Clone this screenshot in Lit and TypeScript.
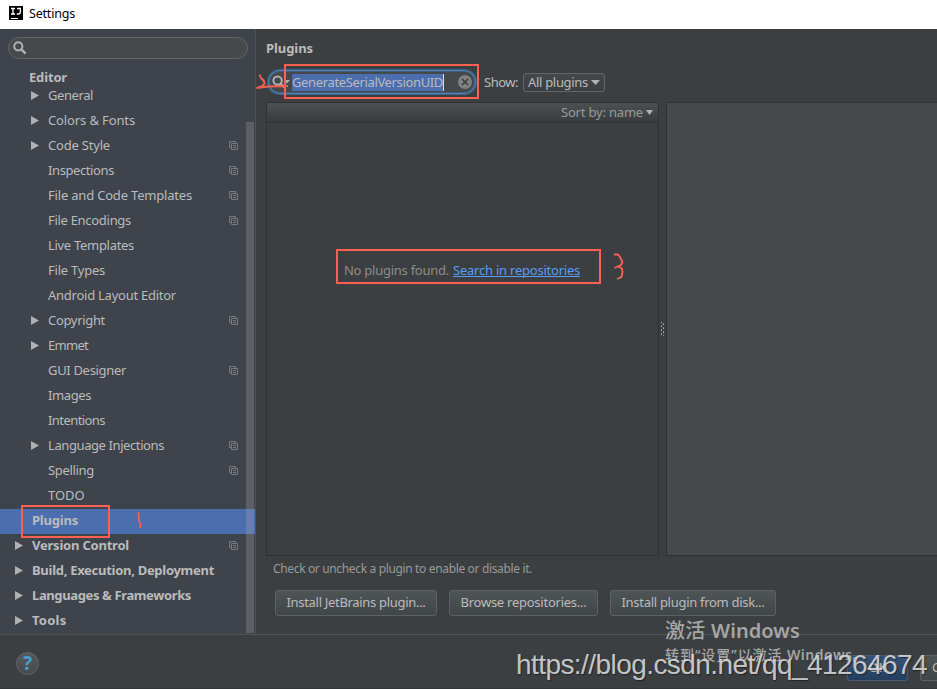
import { LitElement, html, css, svg, nothing } from "lit";
import { customElement, property } from "lit/decorators.js";

/** A single line of text whose tracking is spread so that it fills a given width. */
@customElement("fit-label")
class FitLabel extends LitElement {
  static styles = css`
    :host { display: inline-block; white-space: pre; flex: none; }
  `;
  @property() text = "";
  @property({ type: Number }) w = 0;

  render() {
    return html`<span>${this.text}</span>`;
  }

  updated() {
    const span = this.renderRoot.querySelector("span") as HTMLSpanElement;
    span.style.letterSpacing = "0px";
    const natural = span.getBoundingClientRect().width;
    span.style.letterSpacing = `${(this.w - natural) / this.text.length}px`;
  }
}

interface Row {
  t: string;
  w: number;
  top?: boolean;
  arrow?: boolean;
  copy?: boolean;
  selected?: boolean;
}

const ROWS: Row[] = [
  { t: "General", w: 45, arrow: true },
  { t: "Colors & Fonts", w: 87, arrow: true },
  { t: "Code Style", w: 62, arrow: true, copy: true },
  { t: "Inspections", w: 66, copy: true },
  { t: "File and Code Templates", w: 144, copy: true },
  { t: "File Encodings", w: 83, copy: true },
  { t: "Live Templates", w: 86 },
  { t: "File Types", w: 57 },
  { t: "Android Layout Editor", w: 128 },
  { t: "Copyright", w: 57, arrow: true, copy: true },
  { t: "Emmet", w: 40, arrow: true },
  { t: "GUI Designer", w: 78, copy: true },
  { t: "Images", w: 43 },
  { t: "Intentions", w: 57 },
  { t: "Language Injections", w: 116, arrow: true, copy: true },
  { t: "Spelling", w: 46, copy: true },
  { t: "TODO", w: 36.5 },
  { t: "Plugins", w: 46, top: true, selected: true },
  { t: "Version Control", w: 97, top: true, arrow: true, copy: true },
  { t: "Build, Execution, Deployment", w: 182, top: true, arrow: true },
  { t: "Languages & Frameworks", w: 159, top: true, arrow: true },
  { t: "Tools", w: 34.5, top: true, arrow: true },
];

const label = (t: string, w: number) => html`<fit-label .text=${t} .w=${w}></fit-label>`;

const copyIcon = html`<svg class="copy" width="9" height="9" viewBox="0 0 9 9" fill="none" stroke="#777b80">
  <path d="M2 6.5H.5V.5H6.5V2M2.5 2.5H8.5V8.5H2.5ZM4 4.5H7M4 6.5H7" />
</svg>`;

const arrowIcon = html`<svg width="8" height="9" viewBox="0 0 8 9"><path d="M0 0L8 4.5L0 9Z" fill="#afb1b3" /></svg>`;

const down = (w: number, h: number, fill: string) =>
  html`<svg width=${w} height=${h} viewBox="0 0 10 6" preserveAspectRatio="none"><path d="M0 0H10L5 6Z" fill=${fill} /></svg>`;

@customElement("app-root")
class AppRoot extends LitElement {
  static styles = css`
    :host {
      display: flex; flex-direction: column; position: relative; overflow: hidden;
      width: 937px; height: 689px; box-sizing: border-box;
      background: #3c3f41; color: #bbbbbb;
      font: 13px/18px "Noto Sans", "Open Sans", sans-serif;
    }
    * { box-sizing: border-box; }
    svg { display: block; flex: none; }
    .titlebar {
      height: 29px; flex: none; background: #fff; color: #000;
      display: flex; align-items: center; padding: 0 0 2px 9px; gap: 6px;
      font-size: 12.5px;
    }
    .titlebar svg { margin-bottom: 1px; }
    .body { display: flex; height: 605px; flex: none; }
    .side {
      width: 256px; flex: none; background: #3e434c; border-right: 1px solid #4f5254;
      display: flex; flex-direction: column; position: relative;
    }
    .find {
      margin: 8px 0 0 8px; width: 240px; height: 22px; flex: none;
      border: 1px solid #646566; border-radius: 11px; background: #45494a;
      display: flex; align-items: center; padding-left: 4px;
    }
    .head { height: 25px; flex: none; padding: 9px 0 0 29px; font-weight: 700; line-height: 18px; }
    .row { height: 25px; display: flex; align-items: flex-start; padding: 2px 17px 0 0; }
    .slot { width: 48px; padding: 5px 0 0 31px; flex: none; }
    .top { font-weight: 700; }
    .top .slot { width: 32px; padding-left: 15px; }
    .selected { background: #4b6eaf; }
    .copy { margin: 5px 0 0 auto; }
    .thumb {
      position: absolute; left: 246px; top: 93px; width: 8px; height: 511px;
      background: rgba(166, 166, 166, 0.29);
    }
    .main { flex: 1; min-width: 0; display: flex; flex-direction: column; padding-left: 10px; }
    .title { height: 39px; padding-top: 10px; font-weight: 700; flex: none; }
    .tools { height: 28px; flex: none; display: flex; align-items: center; }
    .query {
      width: 208px; height: 24px; margin-left: 2px; border-radius: 12px; flex: none;
      border: 1px solid #4f84b4; box-shadow: 0 0 0 1px #3d6185, inset 0 0 0 1px #3d5c7c;
      background: #45494a; display: flex; align-items: center; padding: 0 3px 0 3px;
    }
    .query .sel {
      margin-left: 2px; height: 17px; line-height: 17px; background: #4b6eaf; border-right: 1px solid #ddd;
      width: 152px; display: flex;
    }
    .query .clear { margin-left: auto; }
    .show { margin-left: 8px; }
    .combo {
      margin-left: 5px; width: 82px; height: 19px; border: 1px solid #646566; border-radius: 3px;
      background: linear-gradient(#45484a, #3b3e40); display: flex; align-items: center; padding-left: 4px; gap: 3px;
    }
    .panels { display: flex; height: 454px; margin-top: 6px; flex: none; }
    .list { width: 393px; border: 1px solid #2f3132; display: flex; flex-direction: column; }
    .sort {
      height: 20px; border-bottom: 1px solid #303234; background: linear-gradient(#4c5052, #393c3e);
      display: flex; align-items: center; justify-content: flex-end; gap: 3px; padding: 0 5px 1px 0; color: #999;
    }
    .empty { display: flex; padding: 138px 0 0 77px; color: #8c8c8c; gap: 4px; }
    .link { height: 16px; color: #589df6; border-bottom: 1px solid #589df6; }
    .grip { width: 7px; display: flex; align-items: center; justify-content: center; }
    .detail { flex: 1; background: #45494a; border: 1px solid #2f3132; border-right: 0; }
    .hint { height: 34px; padding: 4px 0 0 7px; color: #999; font-size: 12px; flex: none; }
    .buttons { display: flex; gap: 12px; padding-left: 9px; }
    .btn {
      height: 26px; border: 1px solid #5e6162; border-radius: 3px; padding-bottom: 2px; flex: none;
      background: linear-gradient(#4f5556, #414648); display: flex; align-items: center; justify-content: center;
    }
    .b1 { width: 162px; } .b2 { width: 149px; } .b3 { width: 166px; }
    .foot {
      flex: 1; border-top: 1px solid #515151; border-bottom: 1px solid #333638;
      display: flex; padding: 0 0 0 16px; align-items: flex-start;
    }
    .help {
      width: 23px; height: 23px; margin-top: 17px; border-radius: 50%; border: 1px solid #63676a;
      background: linear-gradient(#55595b, #474b4d); color: #4a9fce; font: 700 19px/20px "Noto Sans", sans-serif;
      text-align: center;
    }
    .ok {
      width: 61px; margin: 20px 0 0 auto; background: linear-gradient(#375374, #253e60); border-color: #4c5b6c;
      font-weight: 700;
    }
    .cancel { width: 60px; margin: 20px -43px 0 12px; justify-content: flex-start; padding-left: 11px; }
    .marks { position: absolute; left: 0; top: 0; }
    .activate {
      position: absolute; left: 665px; top: 617px; color: rgba(190, 190, 190, 0.82); font-weight: 600;
      font-family: "Noto Sans", "Noto Sans CJK SC", sans-serif;
    }
    .han { font-weight: 500; }
    .big { font-size: 20px; line-height: 28px; display: flex; }
    .small { font-size: 14px; line-height: 20px; display: flex; }
    .url {
      position: absolute; left: 516px; top: 649px; font: 28px/32px "Liberation Sans", sans-serif;
      color: rgba(225, 225, 225, 0.86); text-shadow: 1px 1px 1px rgba(20, 20, 20, 0.6);
    }
  `;

  private row(r: Row) {
    return html`<div class="row ${r.top ? "top" : ""} ${r.selected ? "selected" : ""}">
      <div class="slot">${r.arrow ? arrowIcon : nothing}</div>
      ${label(r.t, r.w)} ${r.copy ? copyIcon : nothing}
    </div>`;
  }

  private grip() {
    const dots = [0, 1, 2, 3, 4, 5, 6];
    return html`<svg width="4" height="15" viewBox="0 0 4 15">
      ${dots.map((i) => svg`<rect x=${i % 2 ? 2 : 0} y=${i * 2} width="1" height="1" fill="#b0b0b0" />
        <rect x=${i % 2 ? 0 : 2} y=${i * 2 + 1} width="1" height="1" fill="#8a8a8a" />`)}
    </svg>`;
  }

  render() {
    return html`
      <div class="titlebar">
        <svg width="14" height="14" viewBox="0 0 14 14">
          <rect width="14" height="14" fill="#000" />
          <path d="M2 2.5H6M4 2.5V8M2 8H6M8 2.5H11.3V6.6Q11.3 8 9.8 8H7.8" stroke="#fff" stroke-width="1.3" fill="none" />
          <path d="M2 12.5H9" stroke="#fff" />
        </svg>
        ${label("Settings", 46)}
      </div>
      <div class="body">
        <div class="side">
          <div class="find">
            <svg width="14" height="14" viewBox="0 0 14 14" fill="none" stroke="#afb1b3">
              <circle cx="5.3" cy="5.3" r="4.1" stroke-width="2" /><path d="M8.3 8.3L12.6 12.6" stroke-width="2.4" />
            </svg>
          </div>
          <div class="head">${label("Editor", 38)}</div>
          ${ROWS.map((r) => this.row(r))}
          <div class="thumb"></div>
        </div>
        <div class="main">
          <div class="title">${label("Plugins", 47)}</div>
          <div class="tools">
            <div class="query">
              <svg width="18" height="14" viewBox="0 0 18 14" fill="none" stroke="#afb1b3">
                <circle cx="5.6" cy="5.6" r="4.2" stroke-width="2" /><path d="M8.5 8.5L12.4 12.4" stroke-width="2.2" />
                <path d="M12 5H18L15 8.5Z" fill="#afb1b3" stroke="none" />
              </svg>
              <div class="sel">${label("GenerateSerialVersionUID", 151)}</div>
              <svg class="clear" width="14" height="14" viewBox="0 0 14 14">
                <circle cx="7" cy="7" r="7" fill="#7f8182" />
                <path d="M4 4L10 10M10 4L4 10" stroke="#3c3f41" stroke-width="1.7" />
              </svg>
            </div>
            <div class="show">${label("Show:", 34)}</div>
            <div class="combo">${label("All plugins", 60)} ${down(9, 5, "#afb1b3")}</div>
          </div>
          <div class="panels">
            <div class="list">
              <div class="sort">${label("Sort by: name", 82)} ${down(7, 5, "#afb1b3")}</div>
              <div class="empty">${label("No plugins found.", 105)}<span class="link">${label("Search in repositories", 127)}</span></div>
            </div>
            <div class="grip">${this.grip()}</div>
            <div class="detail"></div>
          </div>
          <div class="hint">${label("Check or uncheck a plugin to enable or disable it.", 259)}</div>
          <div class="buttons">
            <div class="btn b1">${label("Install JetBrains plugin...", 139)}</div>
            <div class="btn b2">${label("Browse repositories...", 126)}</div>
            <div class="btn b3">${label("Install plugin from disk...", 143)}</div>
          </div>
        </div>
      </div>
      <div class="foot">
        <div class="help">?</div>
        <div class="btn ok">${label("OK", 18)}</div>
        <div class="btn cancel">${label("Cancel", 40)}</div>
      </div>
      <svg class="marks" width="937" height="689" viewBox="0 0 937 689" fill="none" stroke="#fa6153" stroke-width="2">
        <rect x="285" y="65" width="193" height="33" />
        <rect x="337" y="250" width="263" height="33" />
        <rect x="22" y="506" width="87" height="31" />
        <path d="M259.5 74.5L261 78L264 81L264.5 84L262 86L256.5 88L268 86.5L288 86" stroke-width="1.8" />
        <path d="M138.5 512L139 521L140.5 524L140 528" stroke-width="1.6" />
        <path d="M614 254.5H618L620 257L622.5 262L621 265L614.5 268L618 266.5L622 268.5L622.5 272L621.5 277L617 279" stroke-width="1.8" />
      </svg>
      <div class="activate">
        <span class="big"><span class="han">${label("激活 ", 46)}</span>${label("Windows", 89)}</span>
        <span class="small"><span class="han">${label("转到\u201c设置\u201d以激活 ", 122)}</span>${label("Windows。", 80)}</span>
      </div>
      <div class="url">${label("https://blog.csdn.net/qq_41264674", 411)}</div>
    `;
  }
}
